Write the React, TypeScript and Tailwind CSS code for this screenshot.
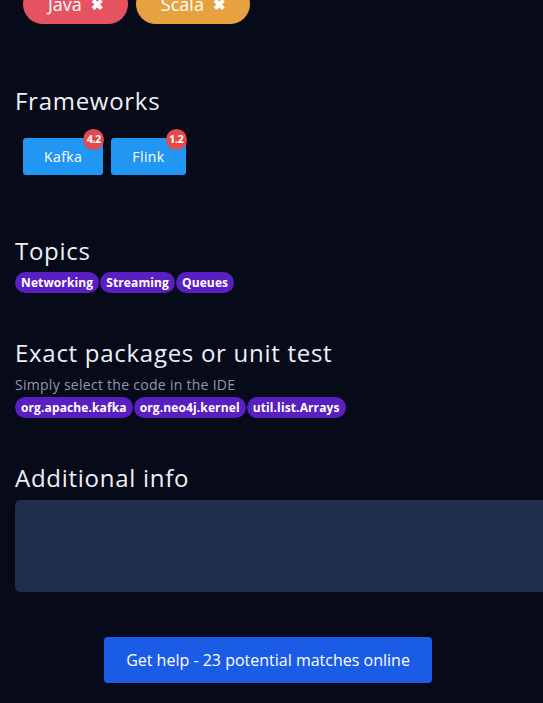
import React from 'react';

const font = { fontFamily: '"Open Sans", "Noto Sans", sans-serif' };

const Heading = ({ children }: { children: React.ReactNode }) => (
    <h2 className="text-[24px] leading-8 text-[#eef0f6] font-normal tracking-[0.03em]">{children}</h2>
);

const Chip = ({ label }: { label: string }) => (
    <span className="inline-flex items-center h-[21px] px-[6px] rounded-full bg-[#5a1fc2] text-white text-[12px] font-bold leading-none tracking-[0.01em]">
        {label}
    </span>
);

const LangTag = ({ label, color }: { label: string, color: string }) => (
    <span className={`inline-flex items-center h-[40px] pl-[25px] pr-[24px] rounded-full text-white text-[18px] ${color}`}>
        {label}
        <span className="ml-[9px] text-[15px] font-bold">✖</span>
    </span>
);

const Framework = ({ label, version }: { label: string, version: string }) => (
    <button className="relative h-[37px] px-[21px] rounded-[3px] bg-[#2196f3] text-white text-[14px] tracking-[0.03em]">
        {label}
        <span className="absolute -top-[9px] -right-[1px] w-[21px] h-[21px] rounded-full bg-[#e5484d] text-white text-[11px] font-bold flex items-center justify-center tracking-tighter">
            {version}
        </span>
    </button>
);

export default function App() {
    return (
        <div style={font} className="w-[543px] h-[703px] overflow-hidden bg-[#070a19]">
            <div className="pl-[15px]">
                <div className="-mt-[16px] pl-[8px] flex gap-[8px]">
                    <LangTag label="Java" color="bg-[#e4535f]" />
                    <LangTag label="Scala" color="bg-[#e6a23f]" />
                </div>

                <div className="mt-[61px]">
                    <Heading>Frameworks</Heading>
                </div>
                <div className="mt-[21px] pl-[8px] flex gap-[8px]">
                    <Framework label="Kafka" version="4.2" />
                    <Framework label="Flink" version="1.2" />
                </div>

                <div className="mt-[60px]">
                    <Heading>Topics</Heading>
                </div>
                <div className="mt-[5px] flex gap-[1px]">
                    <Chip label="Networking" />
                    <Chip label="Streaming" />
                    <Chip label="Queues" />
                </div>

                <div className="mt-[44px]">
                    <Heading>Exact packages or unit test</Heading>
                </div>
                <p className="mt-[6px] text-[14px] leading-5 text-[#9198ab] tracking-[0.02em]">Simply select the code in the IDE</p>
                <div className="mt-[2px] flex gap-[1px]">
                    <Chip label="org.apache.kafka" />
                    <Chip label="org.neo4j.kernel" />
                    <Chip label="util.list.Arrays" />
                </div>

                <div className="mt-[44px]">
                    <Heading>Additional info</Heading>
                </div>
                <textarea className="mt-[6px] block w-[600px] h-[92px] rounded-[5px] bg-[#1d2d4a] resize-none outline-none" />

                <div className="mt-[45px] flex justify-center pr-[22px]">
                    <button className="h-[46px] w-[328px] rounded-[4px] bg-[#1b5ce6] text-white text-[16px]">
                        Get help - 23 potential matches online
                    </button>
                </div>
            </div>
        </div>
    );
}
